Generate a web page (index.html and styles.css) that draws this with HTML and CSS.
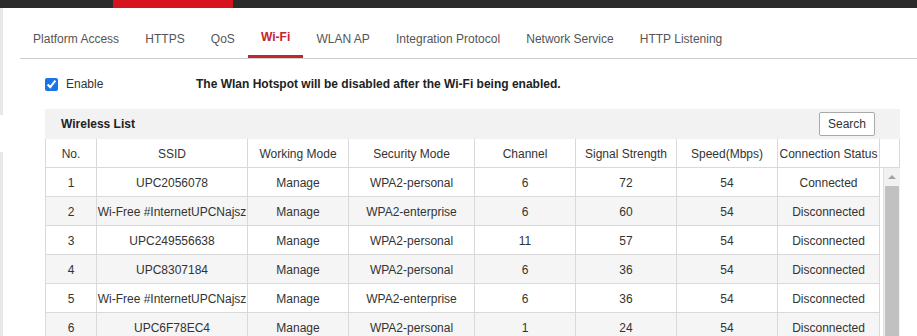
FILE: index.html
```html
<!DOCTYPE html>
<html lang="en">
<head>
  <meta charset="UTF-8">
  <title>Network - Wi-Fi</title>
  <link rel="stylesheet" href="styles.css">
</head>
<body>

<div class="topbar"><div class="topbar-active"></div></div>

<div class="page">
  <div class="side">
    <div class="side-top"></div>
    <div class="side-bottom"></div>
  </div>

  <div class="content">
    <ul class="tabs">
      <li>Platform Access</li>
      <li>HTTPS</li>
      <li>QoS</li>
      <li class="active">Wi-Fi</li>
      <li>WLAN AP</li>
      <li>Integration Protocol</li>
      <li>Network Service</li>
      <li>HTTP Listening</li>
    </ul>

    <div class="enable-row">
      <label class="enable-field"><input type="checkbox" checked> Enable</label>
      <span class="notice">The Wlan Hotspot will be disabled after the Wi-Fi being enabled.</span>
    </div>

    <div class="panel">
      <div class="panel-head">
        <span class="panel-title">Wireless List</span>
        <button class="search-btn">Search</button>
      </div>

      <table class="grid grid-head">
        <colgroup>
          <col class="c-no"><col class="c-ssid"><col class="c-mode"><col class="c-sec">
          <col class="c-ch"><col class="c-sig"><col class="c-spd"><col class="c-st"><col>
        </colgroup>
        <tr>
          <td>No.</td><td>SSID</td><td>Working Mode</td><td>Security Mode</td>
          <td>Channel</td><td>Signal Strength</td><td>Speed(Mbps)</td><td>Connection Status</td><td></td>
        </tr>
      </table>

      <div class="grid-body">
        <table class="grid">
          <colgroup>
            <col class="c-no"><col class="c-ssid"><col class="c-mode"><col class="c-sec">
            <col class="c-ch"><col class="c-sig"><col class="c-spd"><col class="c-st">
          </colgroup>
          <tr><td>1</td><td>UPC2056078</td><td>Manage</td><td>WPA2-personal</td><td>6</td><td>72</td><td>54</td><td>Connected</td></tr>
          <tr><td>2</td><td>Wi-Free #InternetUPCNajsz</td><td>Manage</td><td>WPA2-enterprise</td><td>6</td><td>60</td><td>54</td><td>Disconnected</td></tr>
          <tr><td>3</td><td>UPC249556638</td><td>Manage</td><td>WPA2-personal</td><td>11</td><td>57</td><td>54</td><td>Disconnected</td></tr>
          <tr><td>4</td><td>UPC8307184</td><td>Manage</td><td>WPA2-personal</td><td>6</td><td>36</td><td>54</td><td>Disconnected</td></tr>
          <tr><td>5</td><td>Wi-Free #InternetUPCNajsz</td><td>Manage</td><td>WPA2-enterprise</td><td>6</td><td>36</td><td>54</td><td>Disconnected</td></tr>
          <tr><td>6</td><td>UPC6F78EC4</td><td>Manage</td><td>WPA2-personal</td><td>1</td><td>24</td><td>54</td><td>Disconnected</td></tr>
        </table>
        <div class="scroll-gap"></div>
        <div class="scrollbar">
          <div class="scroll-arrow"></div>
          <div class="scroll-thumb"></div>
        </div>
      </div>
    </div>
  </div>
</div>

</body>
</html>
```

FILE: styles.css
```css
body {
  font-family: "Liberation Sans", Arial, sans-serif;
  font-size: 12px;
  color: #333;
  background: #fff;
  margin: 0;
  padding: 0;
}

.topbar {
  height: 8px;
  background: #2b2b2b;
}

.topbar-active {
  margin-left: 113px;
  width: 120px;
  height: 8px;
  background: #d7141d;
}

.page {
  display: flex;
}

.side {
  width: 3px;
  display: flex;
  flex-direction: column;
}

.side-top {
  height: 107px;
  background: #e8e8e8;
}

.side-bottom {
  margin-top: 37px;
  height: 200px;
  background: #e8e8e8;
}

.content {
  flex: 1;
  padding-left: 17px;
}

.tabs {
  display: flex;
  list-style: none;
  margin: 0;
  padding: 0;
  border-bottom: 1px solid #cfcfcf;
}

.tabs li {
  padding: 24px 13.1px 9px;
  line-height: 14px;
  color: #555;
  border-bottom: 3px solid transparent;
  cursor: pointer;
}

.tabs li.active {
  padding-top: 22px;
  padding-bottom: 11px;
  color: #c0262e;
  font-weight: bold;
  border-bottom-color: #c0262e;
}

.enable-row {
  display: flex;
  align-items: center;
  height: 50px;
  padding-left: 25px;
}

.enable-field {
  display: flex;
  align-items: center;
  gap: 8px;
  width: 151px;
}

.enable-field input {
  width: 13px;
  height: 13px;
  margin: 0;
  accent-color: #1a73e8;
}

.notice {
  font-weight: bold;
  color: #222;
}

.panel {
  margin: 0 17px 0 25px;
}

.panel-head {
  display: flex;
  align-items: center;
  justify-content: space-between;
  height: 30px;
  padding: 0 25px 0 16px;
  background: #f2f2f2;
}

.panel-title {
  font-weight: bold;
  color: #222;
}

.search-btn {
  width: 56px;
  height: 24px;
  padding: 0;
  font-family: inherit;
  font-size: 12px;
  color: #333;
  background: #fff;
  border: 1px solid #a9a9a9;
  border-radius: 2px;
}

.grid {
  border-collapse: collapse;
  table-layout: fixed;
}

.grid-head {
  width: 100%;
}

.grid td {
  height: 27px;
  padding: 1px 0 0;
  border: 1px solid #d9d9d9;
  text-align: center;
  white-space: nowrap;
  overflow: hidden;
}

.grid-head td {
  border-top: none;
}

.grid-body {
  display: flex;
  align-items: flex-start;
}

.grid-body .grid {
  width: 834px;
  flex: none;
}

.grid-body .grid td {
  border-top: none;
}

.grid-body tr:nth-child(even) td {
  background: #f5f5f5;
}

.c-no { width: 51px; }
.c-ssid { width: 151px; }
.c-mode { width: 101px; }
.c-sec { width: 126px; }
.c-ch { width: 101px; }
.c-sig { width: 101px; }
.c-spd { width: 101px; }
.c-st { width: 102px; }

.scroll-gap {
  width: 3px;
  height: 180px;
  border-right: 1px solid #e0e0e0;
}

.scrollbar {
  width: 16px;
  height: 180px;
  background: #f1f1f1;
  display: flex;
  flex-direction: column;
  align-items: center;
}

.scroll-arrow {
  margin-top: 7px;
  width: 0;
  height: 0;
  border-left: 4px solid transparent;
  border-right: 4px solid transparent;
  border-bottom: 4px solid #a3a3a3;
}

.scroll-thumb {
  margin-top: 7px;
  width: 14px;
  flex: 1;
  background: #c1c1c1;
}
```
